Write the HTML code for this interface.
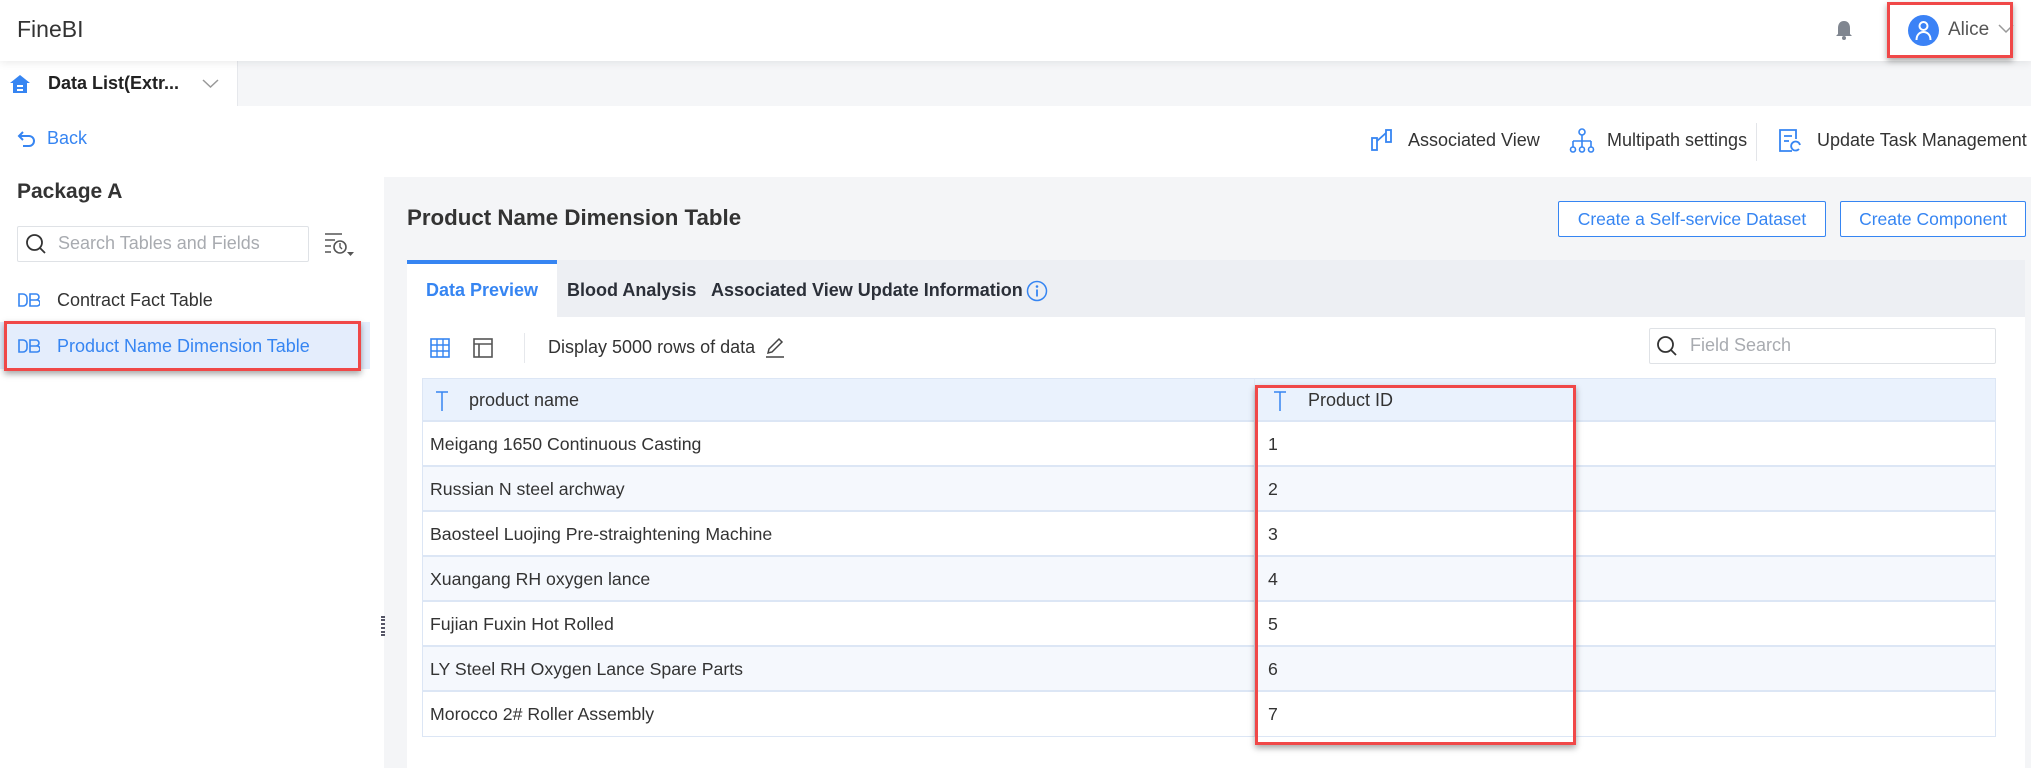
<!DOCTYPE html>
<html><head><meta charset="utf-8"><style>
*{margin:0;padding:0;box-sizing:border-box}
body{width:2031px;height:768px;overflow:hidden;background:#fff;font-family:"Liberation Sans",Arial,sans-serif;color:#333;position:relative}
.a{position:absolute}
.t{white-space:nowrap}
.blue{color:#3685f2}
.rb{border:3px solid #f04848;box-shadow:0 3px 6px rgba(0,0,0,.35)}
.c{font-size:17.7px}
</style></head><body>
<!-- header -->
<div class="a" style="left:0;top:0;width:2031px;height:61px;background:#fff;box-shadow:0 2px 8px rgba(0,0,0,.08);z-index:2"></div>
<div class="a t" style="left:17px;top:16px;font-size:23px;color:#333;z-index:3">FineBI</div>
<svg class="a" style="left:1835px;top:19px;z-index:3" width="18" height="22" viewBox="0 0 18 22"><path d="M9 2c-4 0-6 3-6 7v6l-2 2h16l-2-2V9c0-4-2-7-6-7z" fill="#808690"/><circle cx="9" cy="19" r="2" fill="#808690"/></svg>
<div class="a rb" style="left:1887px;top:2px;width:126px;height:56px;z-index:4"></div>
<div class="a" style="left:1908px;top:15px;width:31px;height:31px;border-radius:50%;background:#3b82f6;z-index:3"></div>
<svg class="a" style="left:1908px;top:15px;z-index:3" width="31" height="31" viewBox="0 0 31 31"><circle cx="15.5" cy="11" r="4" fill="none" stroke="#fff" stroke-width="2"/><path d="M8.5 25c0-5 3-8 7-8s7 3 7 8" fill="none" stroke="#fff" stroke-width="2"/></svg>
<div class="a t" style="left:1948px;top:19px;font-size:19px;color:#555;z-index:3">Alice</div>
<svg class="a" style="left:1998px;top:24px;z-index:3" width="16" height="10"><path d="M1 1l7 7 7-7" fill="none" stroke="#999" stroke-width="1.5"/></svg>
<!-- tab bar -->
<div class="a" style="left:0;top:61px;width:2031px;height:45px;background:#f5f6f8"></div>
<div class="a" style="left:0;top:61px;width:238px;height:45px;background:#fff;border-right:1px solid #e6e8ec"></div>
<svg class="a" style="left:9px;top:74px" width="22" height="20" viewBox="0 0 22 20"><path d="M11 1L1 9h3v10h14V9h3z" fill="#3685f2"/><rect x="8" y="11" width="6" height="2" fill="#fff"/><rect x="8" y="15" width="6" height="2" fill="#fff"/></svg>
<div class="a t" style="left:48px;top:73px;font-size:18px;font-weight:bold;color:#222">Data List(Extr...</div>
<svg class="a" style="left:202px;top:79px" width="17" height="10"><path d="M1 1l7.5 7 7.5-7" fill="none" stroke="#999" stroke-width="1.5"/></svg>
<!-- back row -->
<svg class="a" style="left:17px;top:130px" width="20" height="18" viewBox="0 0 20 18"><path d="M6 2L2 6l4 4" fill="none" stroke="#3685f2" stroke-width="2"/><path d="M2 6h10a5 5 0 010 10H6" fill="none" stroke="#3685f2" stroke-width="2"/></svg>
<div class="a t blue" style="left:47px;top:128px;font-size:18px">Back</div>
<!-- toolbar -->
<svg class="a" style="left:1370px;top:128px" width="24" height="24" viewBox="0 0 24 24"><rect x="2" y="10" width="5" height="12" fill="none" stroke="#3685f2" stroke-width="1.8"/><rect x="16" y="2" width="5" height="12" fill="none" stroke="#3685f2" stroke-width="1.8"/><path d="M7 13l9-8" stroke="#3685f2" stroke-width="1.8"/></svg>
<div class="a t" style="left:1408px;top:130px;font-size:18px">Associated View</div>
<svg class="a" style="left:1569px;top:128px" width="26" height="26" viewBox="0 0 26 26"><circle cx="13" cy="4" r="3" fill="none" stroke="#3685f2" stroke-width="1.6"/><path d="M13 7v6M4 13h18M4 13v6M13 13v6M22 13v6" stroke="#3685f2" stroke-width="1.6" fill="none"/><circle cx="4" cy="21.5" r="2.5" fill="none" stroke="#3685f2" stroke-width="1.6"/><circle cx="13" cy="21.5" r="2.5" fill="none" stroke="#3685f2" stroke-width="1.6"/><circle cx="22" cy="21.5" r="2.5" fill="none" stroke="#3685f2" stroke-width="1.6"/></svg>
<div class="a t" style="left:1607px;top:130px;font-size:18px">Multipath settings</div>
<div class="a" style="left:1756px;top:123px;width:1px;height:38px;background:#e3e5e9"></div>
<svg class="a" style="left:1778px;top:128px" width="24" height="26" viewBox="0 0 24 26"><path d="M14 23H2V2h16v9" fill="none" stroke="#3685f2" stroke-width="1.8"/><path d="M6 8h8M6 13h5" stroke="#3685f2" stroke-width="1.8"/><path d="M22 17a4.5 4.5 0 10-1 4" fill="none" stroke="#3685f2" stroke-width="1.8"/></svg>
<div class="a t" style="left:1817px;top:130px;font-size:18px">Update Task Management</div>
<!-- sidebar -->
<div class="a t" style="left:17px;top:180px;font-size:21px;font-weight:bold;color:#333">Package A</div>
<div class="a" style="left:17px;top:226px;width:292px;height:36px;border:1px solid #dfe2e6;border-radius:2px"></div>
<svg class="a" style="left:25px;top:233px" width="22" height="22" viewBox="0 0 22 22"><circle cx="9.5" cy="9.5" r="7.5" fill="none" stroke="#333" stroke-width="1.8"/><path d="M15 15l5 5" stroke="#333" stroke-width="1.8"/></svg>
<div class="a t" style="left:58px;top:233px;font-size:18px;color:#a8abb0">Search Tables and Fields</div>
<svg class="a" style="left:324px;top:232px" width="30" height="26" viewBox="0 0 30 26"><path d="M1 2h17M1 8h10M1 14h6M1 20h6" stroke="#555" stroke-width="1.6"/><circle cx="16" cy="15" r="6" fill="none" stroke="#555" stroke-width="1.6"/><path d="M16 11v4l2 2" stroke="#555" stroke-width="1.4" fill="none"/><path d="M23 20h7l-3.5 4z" fill="#555"/></svg>
<svg class="a" style="left:18px;top:293px" width="22" height="14" viewBox="0 0 22 14"><path d="M1 1h4a4 4 0 014 4v4a4 4 0 01-4 4H1z" fill="none" stroke="#3685f2" stroke-width="1.6"/><path d="M12 1h6a3 3 0 010 6h-6zM12 7h7a3 3 0 010 6h-7z" fill="none" stroke="#3685f2" stroke-width="1.6"/></svg>
<div class="a t" style="left:57px;top:290px;font-size:18px;color:#333">Contract Fact Table</div>
<div class="a" style="left:0;top:322px;width:370px;height:47px;background:#e4edfc"></div>
<div class="a rb" style="left:4px;top:321px;width:357px;height:50px"></div>
<svg class="a" style="left:18px;top:339px" width="22" height="14" viewBox="0 0 22 14"><path d="M1 1h4a4 4 0 014 4v4a4 4 0 01-4 4H1z" fill="none" stroke="#3685f2" stroke-width="1.6"/><path d="M12 1h6a3 3 0 010 6h-6zM12 7h7a3 3 0 010 6h-7z" fill="none" stroke="#3685f2" stroke-width="1.6"/></svg>
<div class="a t blue" style="left:57px;top:336px;font-size:18px">Product Name Dimension Table</div>
<!-- main grey panel -->
<div class="a" style="left:384px;top:177px;width:1647px;height:591px;background:#f4f5f7"></div>
<div class="a" style="left:381px;top:616px;width:3px;height:20px;border-left:2px dotted #556;border-right:2px dotted #556"></div>
<div class="a t" style="left:407px;top:205px;font-size:22.3px;font-weight:bold;color:#333">Product Name Dimension Table</div>
<div class="a t blue" style="left:1558px;top:201px;width:268px;height:36px;border:1px solid #3685f2;border-radius:2px;background:#fff;font-size:17.5px;text-align:center;line-height:34px">Create a Self-service Dataset</div>
<div class="a t blue" style="left:1840px;top:201px;width:186px;height:36px;border:1px solid #3685f2;border-radius:2px;background:#fff;font-size:17.5px;text-align:center;line-height:34px">Create Component</div>
<!-- tabs -->
<div class="a" style="left:407px;top:260px;width:1618px;height:57px;background:#edeff3"></div>
<div class="a" style="left:407px;top:260px;width:150px;height:57px;background:#fff;border-top:4px solid #3685f2"></div>
<div class="a t blue" style="left:426px;top:280px;font-size:18px;font-weight:bold">Data Preview</div>
<div class="a t" style="left:567px;top:280px;font-size:18px;font-weight:bold;color:#2b2f38">Blood Analysis</div>
<div class="a t" style="left:711px;top:280px;font-size:18px;font-weight:bold;color:#2b2f38">Associated View Update Information</div>
<svg class="a" style="left:1026px;top:280px" width="22" height="22"><circle cx="11" cy="11" r="9.5" fill="none" stroke="#3685f2" stroke-width="1.5"/><circle cx="11" cy="6.5" r="1.3" fill="#3685f2"/><path d="M11 9.5v7" stroke="#3685f2" stroke-width="1.8"/></svg>
<!-- card -->
<div class="a" style="left:407px;top:317px;width:1618px;height:451px;background:#fff"></div>
<svg class="a" style="left:430px;top:338px" width="20" height="20" viewBox="0 0 20 20"><rect x="1" y="1" width="18" height="18" fill="none" stroke="#3685f2" stroke-width="1.6"/><path d="M1 7h18M1 13h18M7 1v18M13 1v18" stroke="#3685f2" stroke-width="1.4"/></svg>
<svg class="a" style="left:473px;top:338px" width="20" height="20" viewBox="0 0 20 20"><rect x="1" y="1" width="18" height="18" fill="none" stroke="#555" stroke-width="1.6"/><path d="M1 6h18M6 6v13" stroke="#555" stroke-width="1.6"/></svg>
<div class="a" style="left:524px;top:333px;width:1px;height:30px;background:#e6e8ec"></div>
<div class="a t" style="left:548px;top:337px;font-size:18px;color:#333">Display 5000 rows of data</div>
<svg class="a" style="left:764px;top:337px" width="22" height="22" viewBox="0 0 22 22"><path d="M4 16l1-4L15 2l3 3L8 15z" fill="none" stroke="#444" stroke-width="1.5"/><path d="M2 20h18" stroke="#444" stroke-width="1.5"/></svg>
<div class="a" style="left:1649px;top:328px;width:347px;height:36px;border:1px solid #dfe2e6;border-radius:2px"></div>
<svg class="a" style="left:1656px;top:335px" width="22" height="22" viewBox="0 0 22 22"><circle cx="9.5" cy="9.5" r="7.5" fill="none" stroke="#333" stroke-width="1.8"/><path d="M15 15l5 5" stroke="#333" stroke-width="1.8"/></svg>
<div class="a t" style="left:1690px;top:335px;font-size:18px;color:#a8abb0">Field Search</div>
<!-- table -->
<div class="a" style="left:422px;top:378px;width:1574px;height:359px;border:1px solid #dce6f5"></div>
<div class="a" style="left:423px;top:379px;width:1572px;height:43px;background:#eaf2fd;border-bottom:2px solid #dce6f5"></div>
<svg class="a" style="left:435px;top:391px" width="14" height="20"><path d="M1 1h12M7 1v19" stroke="#3685f2" stroke-width="1.5"/></svg>
<div class="a t" style="left:469px;top:390px;font-size:18px;color:#333">product name</div>
<svg class="a" style="left:1273px;top:391px" width="14" height="20"><path d="M1 1h12M7 1v19" stroke="#3685f2" stroke-width="1.5"/></svg>
<div class="a t" style="left:1308px;top:390px;font-size:18px;color:#333">Product ID</div>

<div class="a" style="left:423px;top:422px;width:1572px;height:45px;border-bottom:2px solid #dce6f5"></div>
<div class="a" style="left:423px;top:467px;width:1572px;height:45px;background:#f5f8fd;border-bottom:2px solid #dce6f5"></div>
<div class="a" style="left:423px;top:512px;width:1572px;height:45px;border-bottom:2px solid #dce6f5"></div>
<div class="a" style="left:423px;top:557px;width:1572px;height:45px;background:#f5f8fd;border-bottom:2px solid #dce6f5"></div>
<div class="a" style="left:423px;top:602px;width:1572px;height:45px;border-bottom:2px solid #dce6f5"></div>
<div class="a" style="left:423px;top:647px;width:1572px;height:45px;background:#f5f8fd;border-bottom:2px solid #dce6f5"></div>
<div class="a" style="left:1254px;top:379px;width:1px;height:357px;background:#e1e9f5"></div>

<div class="a t c" style="left:430px;top:434px">Meigang 1650 Continuous Casting</div>
<div class="a t c" style="left:430px;top:479px">Russian N steel archway</div>
<div class="a t c" style="left:430px;top:524px">Baosteel Luojing Pre-straightening Machine</div>
<div class="a t c" style="left:430px;top:569px">Xuangang RH oxygen lance</div>
<div class="a t c" style="left:430px;top:614px">Fujian Fuxin Hot Rolled</div>
<div class="a t c" style="left:430px;top:659px">LY Steel RH Oxygen Lance Spare Parts</div>
<div class="a t c" style="left:430px;top:704px">Morocco 2# Roller Assembly</div>
<div class="a t c" style="left:1268px;top:434px">1</div>
<div class="a t c" style="left:1268px;top:479px">2</div>
<div class="a t c" style="left:1268px;top:524px">3</div>
<div class="a t c" style="left:1268px;top:569px">4</div>
<div class="a t c" style="left:1268px;top:614px">5</div>
<div class="a t c" style="left:1268px;top:659px">6</div>
<div class="a t c" style="left:1268px;top:704px">7</div>
<div class="a rb" style="left:1255px;top:385px;width:321px;height:360px"></div>
</body></html>
